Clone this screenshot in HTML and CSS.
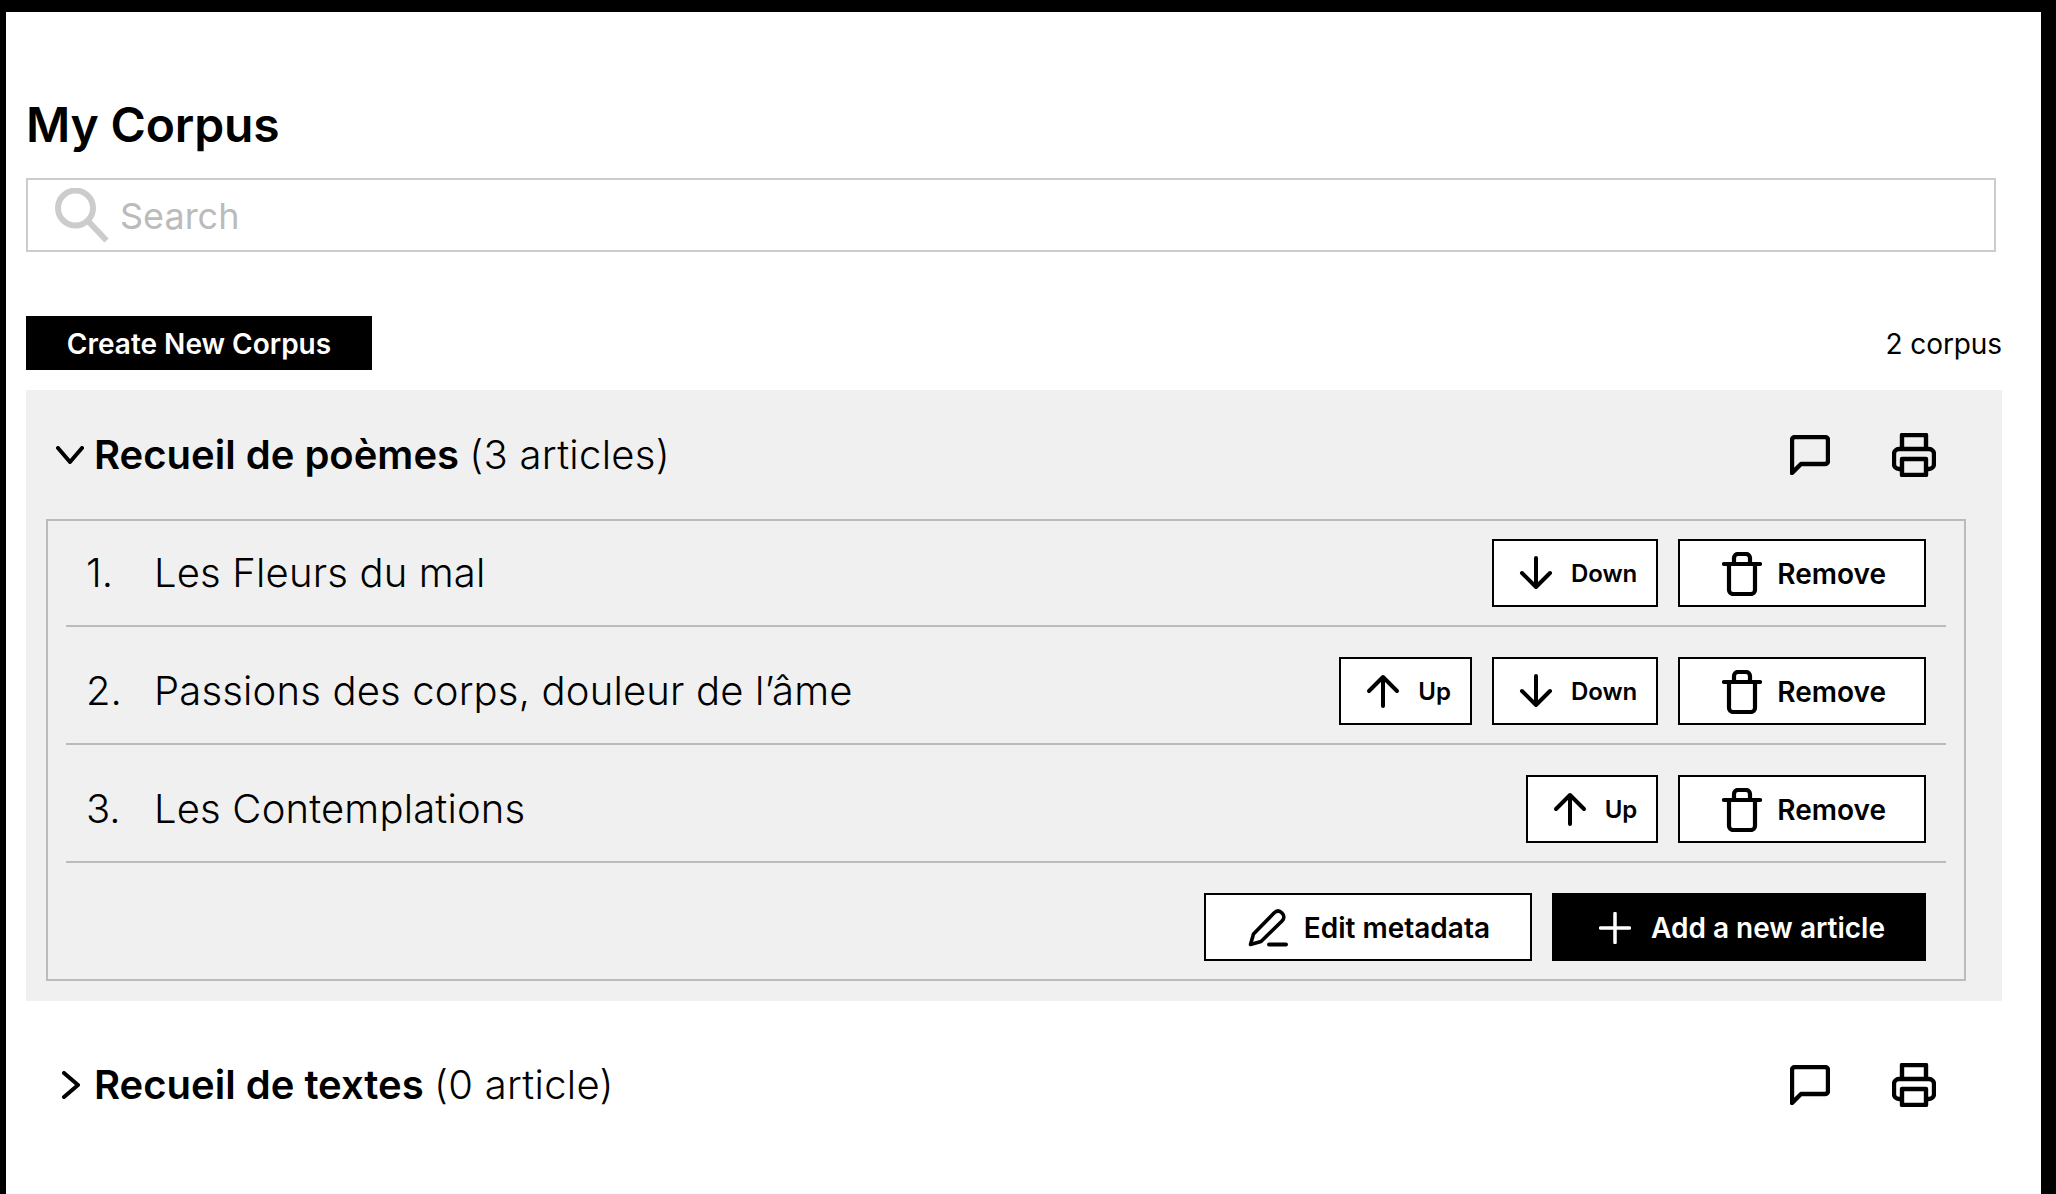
FILE: index.html
```html
<!DOCTYPE html>
<html lang="en">
<head>
<meta charset="utf-8">
<title>My Corpus</title>
<link rel="stylesheet" href="styles.css">
</head>
<body>
<svg class="defs" width="0" height="0" aria-hidden="true">
  <defs>
    <symbol id="i-comment" viewBox="0 0 40 40"><path d="M2 38V5a3 3 0 0 1 3-3h30a3 3 0 0 1 3 3v21a3 3 0 0 1-3 3H11z" fill="none" stroke="currentColor" stroke-width="4.4" stroke-linejoin="round"/></symbol>
    <symbol id="i-print" viewBox="0 0 44 44"><path d="M10 15V2h24v13M10 36H7a5 5 0 0 1-5-5V21a5 5 0 0 1 5-5h30a5 5 0 0 1 5 5v10a5 5 0 0 1-5 5h-3M10 26h24v16H10z" fill="none" stroke="currentColor" stroke-width="4.4" stroke-linejoin="round"/></symbol>
    <symbol id="i-trash" viewBox="0 0 40 44"><path d="M2 12h36M12 11V6a4 4 0 0 1 4-4h8a4 4 0 0 1 4 4v5M7 12v26a4 4 0 0 0 4 4h18a4 4 0 0 0 4-4V12" fill="none" stroke="currentColor" stroke-width="4.2" stroke-linecap="round" stroke-linejoin="round"/></symbol>
    <symbol id="i-down" viewBox="0 0 34 34"><path d="M17 2v29M3 17l14 14 14-14" fill="none" stroke="currentColor" stroke-width="4" stroke-linecap="round" stroke-linejoin="round"/></symbol>
    <symbol id="i-up" viewBox="0 0 34 34"><path d="M17 32V3M3 17 17 3l14 14" fill="none" stroke="currentColor" stroke-width="4" stroke-linecap="round" stroke-linejoin="round"/></symbol>
  </defs>
</svg>
<main class="page">
  <h1 class="title">My Corpus</h1>
  <label class="search">
    <svg class="search-icon" viewBox="0 0 54 55" width="54" height="55" aria-hidden="true"><circle cx="20.500" cy="20" r="17.500" fill="none" stroke="currentColor" stroke-width="6"/><path d="M33 33l18.500 19.500" fill="none" stroke="currentColor" stroke-width="6"/></svg>
    <input class="search-input" type="text" placeholder="Search">
  </label>
  <div class="toolbar">
    <button class="btn-create" type="button">Create New Corpus</button>
    <span class="count">2 corpus</span>
  </div>

  <section class="corpus corpus-open">
    <header class="corpus-head">
      <svg class="chevron" viewBox="0 0 28 18" width="28" height="18" aria-hidden="true"><path d="M2 2l12 14L26 2" fill="none" stroke="currentColor" stroke-width="4" stroke-linecap="round" stroke-linejoin="round"/></svg>
      <h2 class="corpus-name"><strong>Recueil de poèmes</strong> <span class="corpus-meta">(3 articles)</span></h2>
      <div class="corpus-tools">
        <svg class="tool-comment"><use href="#i-comment"/></svg>
        <svg class="tool-print"><use href="#i-print"/></svg>
      </div>
    </header>
    <div class="articles">
      <div class="article">
        <span class="article-num">1.</span><span class="article-title">Les Fleurs du mal</span>
        <div class="article-actions">
          <button class="btn btn-small" type="button"><svg class="ic-arrow"><use href="#i-down"/></svg>Down</button>
          <button class="btn btn-remove" type="button"><svg class="ic-trash"><use href="#i-trash"/></svg>Remove</button>
        </div>
      </div>
      <div class="article">
        <span class="article-num">2.</span><span class="article-title">Passions des corps, douleur de l’âme</span>
        <div class="article-actions">
          <button class="btn btn-small" type="button"><svg class="ic-arrow"><use href="#i-up"/></svg>Up</button>
          <button class="btn btn-small" type="button"><svg class="ic-arrow"><use href="#i-down"/></svg>Down</button>
          <button class="btn btn-remove" type="button"><svg class="ic-trash"><use href="#i-trash"/></svg>Remove</button>
        </div>
      </div>
      <div class="article">
        <span class="article-num">3.</span><span class="article-title">Les Contemplations</span>
        <div class="article-actions">
          <button class="btn btn-small" type="button"><svg class="ic-arrow"><use href="#i-up"/></svg>Up</button>
          <button class="btn btn-remove" type="button"><svg class="ic-trash"><use href="#i-trash"/></svg>Remove</button>
        </div>
      </div>
      <div class="articles-foot">
        <button class="btn btn-edit" type="button"><svg class="ic-pencil" viewBox="0 0 40 38" width="40" height="38" aria-hidden="true"><path d="M2.500 35.500l3-10.500L26 4c2.500-2.500 5.500-2.500 8 0s2.500 5.500 0 8L13 32.500z" fill="none" stroke="currentColor" stroke-width="3.600" stroke-linejoin="round"/><path d="M21 35.500h17" fill="none" stroke="currentColor" stroke-width="4" stroke-linecap="round"/></svg>Edit metadata</button>
        <button class="btn btn-add" type="button"><svg class="ic-plus" viewBox="0 0 32 32" width="32" height="32" aria-hidden="true"><path d="M16 1.500v29M1.500 16h29" fill="none" stroke="currentColor" stroke-width="3.500" stroke-linecap="round"/></svg>Add a new article</button>
      </div>
    </div>
  </section>

  <section class="corpus">
    <header class="corpus-head">
      <svg class="chevron chevron-right" viewBox="0 0 18 28" width="18" height="28" aria-hidden="true"><path d="M2 2l14 12L2 26" fill="none" stroke="currentColor" stroke-width="4" stroke-linecap="round" stroke-linejoin="round"/></svg>
      <h2 class="corpus-name"><strong>Recueil de textes</strong> <span class="corpus-meta">(0 article)</span></h2>
      <div class="corpus-tools">
        <svg class="tool-comment"><use href="#i-comment"/></svg>
        <svg class="tool-print"><use href="#i-print"/></svg>
      </div>
    </header>
  </section>
</main>
</body>
</html>
```
FILE: styles.css
```css
* {
  box-sizing: border-box;
}

html,
body {
  margin: 0;
  background: #fff;
}

body {
  height: 1194px;
  overflow: hidden;
  border-top: 12px solid #000;
  border-left: 6px solid #000;
  border-right: 15px solid #000;
  font-family: Inter, "Liberation Sans", sans-serif;
  color: #000;
}

.defs {
  position: absolute;
}

.page {
  padding: 84px 39px 0 20px;
}

.title {
  margin: 0 0 24px;
  font-size: 48px;
  line-height: 58px;
  font-weight: 600;
  letter-spacing: -0.15px;
}

.search {
  display: flex;
  align-items: center;
  gap: 11px;
  width: 1970px;
  height: 74px;
  padding: 0 0 0 27px;
  border: 2px solid #ccc;
}

.search-icon {
  color: #ccc;
  flex: none;
}

.search-input {
  flex: 1;
  border: 0;
  outline: 0;
  padding: 2px 0 0;
  background: transparent;
  font: 400 36px/44px Inter, "Liberation Sans", sans-serif;
  color: #000;
}

.search-input::placeholder {
  color: #bbb;
  opacity: 1;
}

.toolbar {
  display: flex;
  justify-content: space-between;
  align-items: center;
  margin-top: 64px;
  margin-bottom: 20px;
}

.btn-create {
  height: 54px;
  width: 346px;
  border: 0;
  padding: 2px 0 0;
  background: #000;
  color: #fff;
  font: 600 28px/34px Inter, "Liberation Sans", sans-serif;
}

.count {
  padding-top: 2px;
  font-size: 28px;
  line-height: 34px;
  letter-spacing: -0.1px;
}

.corpus-open {
  background: #f0f0f0;
  padding: 0 36px 20px 20px;
}

.corpus-head {
  display: flex;
  align-items: center;
  height: 129px;
}

.corpus .corpus-head {
  padding-left: 10px;
}

.corpus:not(.corpus-open) .corpus-head {
  padding-left: 30px;
  padding-right: 36px;
  height: 168px;
}

.chevron {
  flex: none;
  margin-right: 10px;
}

.chevron-right {
  margin-left: 6px;
  margin-right: 14px;
}

.corpus-name {
  margin: 0;
  font-size: 40px;
  line-height: 48px;
  font-weight: 300;
}

.corpus-name strong {
  font-weight: 600;
}

.corpus-meta {
  margin-left: -1px;
  letter-spacing: 0.3px;
}

.corpus-tools {
  display: flex;
  align-items: center;
  gap: 62px;
  margin-left: auto;
  padding-right: 30px;
}

.tool-comment {
  width: 40px;
  height: 40px;
}

.tool-print {
  width: 44px;
  height: 44px;
}

.articles {
  border: 2px solid #bbb;
  padding: 0 18px;
}

.article {
  display: flex;
  align-items: center;
  padding: 18px 0;
  border-bottom: 2px solid #bbb;
  margin-bottom: 12px;
}

.article-num,
.article-title {
  font-size: 40px;
  line-height: 48px;
  font-weight: 300;
}

.article-title {
  letter-spacing: 0.17px;
}

.article-num {
  width: 88px;
  padding-left: 20px;
  flex: none;
}

.article-actions,
.articles-foot {
  display: flex;
  gap: 20px;
  margin-left: auto;
  padding-right: 20px;
}

.articles-foot {
  justify-content: flex-end;
  padding-top: 18px;
  padding-bottom: 18px;
}

.btn {
  display: flex;
  align-items: center;
  height: 68px;
  border: 2px solid #000;
  background: #fff;
  color: #000;
  font-family: Inter, "Liberation Sans", sans-serif;
  font-weight: 600;
  font-size: 28px;
  padding: 2px 40px 0 42px;
}

.btn-small {
  font-size: 24px;
  padding: 0 19px 0 25px;
  gap: 18px;
}

.btn-remove {
  gap: 15px;
  padding-right: 38px;
}

.btn-edit {
  gap: 16px;
}

.btn-add {
  gap: 20px;
  background: #000;
  color: #fff;
  padding-left: 45px;
  padding-right: 39px;
}

.ic-arrow {
  width: 34px;
  height: 34px;
}

.ic-trash {
  width: 40px;
  height: 44px;
}
```
